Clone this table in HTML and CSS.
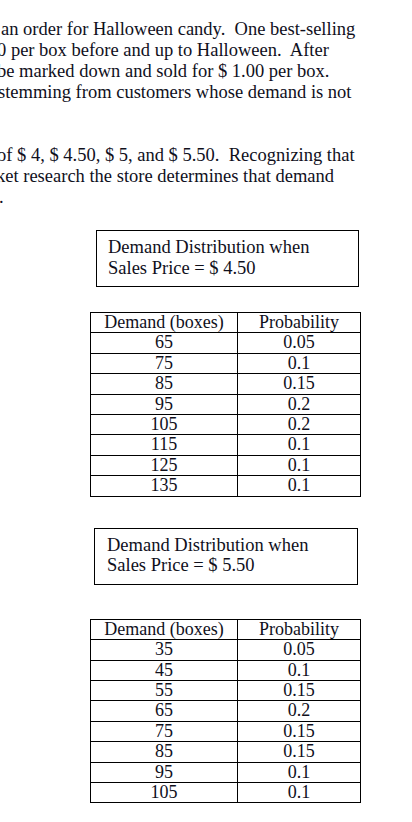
FILE: index.html
```html
<!DOCTYPE html>
<html lang="en">
<head>
    <meta charset="UTF-8">
    <meta name="viewport" content="width=device-width, initial-scale=1.0">
    <title>Halloween Candy</title>
    <link rel="stylesheet" href="styles.css">
</head>
<body>

<div class="page">
    <!-- Problem text (page is cropped on the left) -->
    <div class="para">
        <div class="line l1">an order for Halloween candy.  One best-selling</div>
        <div class="line l2">0 per box before and up to Halloween.  After</div>
        <div class="line l3">be marked down and sold for $ 1.00 per box.</div>
        <div class="line l4">stemming from customers whose demand is not</div>
    </div>

    <div class="para para2">
        <div class="line l5">of $ 4, $ 4.50, $ 5, and $ 5.50.  Recognizing that</div>
        <div class="line l6">ket research the store determines that demand</div>
        <div class="line l7">.</div>
    </div>

    <!-- First distribution -->
    <div class="caption cap1">Demand Distribution when<br>Sales Price = $ 4.50</div>

    <table class="dist t1">
        <tr><td class="c1">Demand (boxes)</td><td>Probability</td></tr>
        <tr><td class="c1">65</td><td>0.05</td></tr>
        <tr><td class="c1">75</td><td>0.1</td></tr>
        <tr><td class="c1">85</td><td>0.15</td></tr>
        <tr><td class="c1">95</td><td>0.2</td></tr>
        <tr><td class="c1">105</td><td>0.2</td></tr>
        <tr><td class="c1">115</td><td>0.1</td></tr>
        <tr><td class="c1">125</td><td>0.1</td></tr>
        <tr><td class="c1">135</td><td>0.1</td></tr>
    </table>

    <!-- Second distribution -->
    <div class="caption cap2">Demand Distribution when<br>Sales Price = $ 5.50</div>

    <table class="dist t2">
        <tr><td class="c1">Demand (boxes)</td><td>Probability</td></tr>
        <tr><td class="c1">35</td><td>0.05</td></tr>
        <tr><td class="c1">45</td><td>0.1</td></tr>
        <tr><td class="c1">55</td><td>0.15</td></tr>
        <tr><td class="c1">65</td><td>0.2</td></tr>
        <tr><td class="c1">75</td><td>0.15</td></tr>
        <tr><td class="c1">85</td><td>0.15</td></tr>
        <tr><td class="c1">95</td><td>0.1</td></tr>
        <tr><td class="c1">105</td><td>0.1</td></tr>
    </table>
</div>

</body>
</html>
```

FILE: styles.css
```css
body {
    margin: 0;
    padding: 0;
    background-color: #fff;
    color: #10101c;
    font-family: "Liberation Serif", "Times New Roman", serif;
    font-size: 18.5px;
    overflow: hidden;
}
.page {
    width: 412px;
    height: 822px;
    padding-top: 19.4px;
    box-sizing: border-box;
    overflow: hidden;
}
.para {
    line-height: 20.8px;
}
.para2 {
    margin-top: 42.5px;
}
.line {
    white-space: pre;
}
.l1 { margin-left: 1px; }
.l2 { margin-left: -3px; }
.l3 { margin-left: -3px; }
.l4 { margin-left: -2px; }
.l5 { margin-left: -3px; }
.l6 { margin-left: -4px; }
.l7 { margin-left: -1px; }

.caption {
    box-sizing: border-box;
    border: 1px solid #000;
    line-height: 20.8px;
    padding: 6px 0 7px 11px;
}
.cap1 {
    margin: 22.5px 0 0 96px;
    width: 263px;
}
.cap2 {
    margin: 31px 0 0 94px;
    width: 264px;
    padding-left: 12px;
    padding-bottom: 8px;
}

.dist {
    border-collapse: collapse;
    margin-left: 90px;
    width: 271px;
    font-size: 18px;
}
.dist td {
    border: 1px solid #000;
    padding: 0;
    line-height: 19.4px;
    text-align: center;
}
.dist td.c1 {
    width: 146px;
}
.t1 {
    margin-top: 25.4px;
}
.t2 {
    margin-top: 33.5px;
}
```
